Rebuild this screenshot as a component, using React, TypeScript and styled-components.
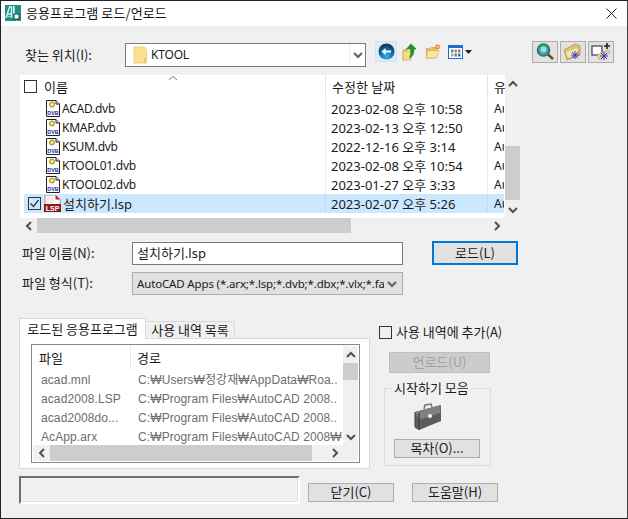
import React from "react";
import styled, { createGlobalStyle } from "styled-components";

const Global = createGlobalStyle`
  html, body { margin: 0; padding: 0; background: #f0f0f0; }
  * { box-sizing: border-box; }
  body { font-family: "Noto Sans", "Noto Sans CJK KR", sans-serif; font-size: 13px; color: #1a1a1a; }
`;

const Window = styled.div`
  width: 628px; height: 519px; display: flex; flex-direction: column; overflow: hidden;
  border: 1px solid #222; border-right-color: #444; background: #f0f0f0;
`;
const TitleBar = styled.div`
  height: 25px; flex: none; background: #fff; display: flex; align-items: center; padding: 0 10px 1px 4px; gap: 5px;
`;
const TitleText = styled.div`
  flex: 1; font-size: 13px; line-height: 16px; letter-spacing: 0.1px; color: #111;
  font-family: "Noto Sans CJK KR", sans-serif;
`;
const Body = styled.div`
  flex: 1; display: flex; flex-direction: column; padding-left: 18px; min-height: 0;
`;
const LocationRow = styled.div`
  height: 26px; margin-top: 15px; display: flex; align-items: flex-start; flex: none;
`;
const LocLabel = styled.div`
  width: 106px; padding: 6px 0 0 6px; line-height: 16px; font-family: "Noto Sans CJK KR", sans-serif; font-size: 13px;
`;
const Combo = styled.div`
  width: 241px; height: 24px; margin-top: 2px; background: #fff; border: 1px solid #7a7a7a; display: flex; align-items: center;
  padding-left: 7px; gap: 4px; font-size: 12px; line-height: 16px; letter-spacing: -0.2px;
`;
const ComboText = styled.span` flex: 1; `;
const ComboArrow = styled.span`
  width: 16px; height: 22px; border-left: 1px solid #e3eefa; display: flex; align-items: center; justify-content: center;
`;
const NavIcons = styled.div`
  display: flex; align-items: flex-start; margin-left: 9px; width: 157px;
`;
const NavBtn = styled.div<{ $w: number; $hover?: boolean }>`
  width: ${p => p.$w}px; height: 21px; display: flex; align-items: center; justify-content: center;
  background: ${p => (p.$hover ? "#dcebf5" : "transparent")};
  border: 1px solid ${p => (p.$hover ? "#d5e3ee" : "transparent")};
`;
const ToolBtns = styled.div` display: flex; gap: 2px; `;
const ToolBtn = styled.div`
  width: 26px; height: 22px; background: #e1e1e1; border: 1px solid #adadad; display: flex; align-items: center; justify-content: center;
`;

const FileGrid = styled.div`
  margin: 8px 0 0 1px; display: grid; grid-template-columns: 485px 15px; grid-template-rows: 143px 15px; width: 500px; flex: none;
`;
const ListView = styled.div`
  background: #fff; position: relative; overflow: hidden; display: flex; flex-direction: column;
`;
const HeadRow = styled.div`
  height: 24px; display: grid; grid-template-columns: 305px 162px 18px; flex: none;
`;
const HeadCell = styled.div<{ $sep?: boolean }>`
  display: flex; align-items: center; gap: 7px; padding-left: ${p => (p.$sep ? "6px" : "4px")}; overflow: hidden; white-space: nowrap;
  border-left: ${p => (p.$sep ? "1px solid #e5e5e5" : "0")}; line-height: 16px; padding-top: 1px; padding-bottom: 2px;
`;
const SortCaret = styled.svg` position: absolute; left: 148px; top: 0; `;
const FileRow = styled.div<{ $sel?: boolean }>`
  height: 19px; margin: 0 1px 0 4px; display: grid; grid-template-columns: 301px 162px 17px; flex: none;
  background: ${p => (p.$sel ? "#cce8ff" : "transparent")};
`;
const NameCell = styled.div<{ $sel?: boolean }>`
  display: flex; align-items: center; white-space: nowrap; line-height: 16px; gap: 2px;
  padding-left: ${p => (p.$sel ? "4px" : "22px")};
  font-size: ${p => (p.$sel ? "13px" : "12px")};
  letter-spacing: ${p => (p.$sel ? "0" : "-0.25px")};
`;
const DataCell = styled.div<{ $pad: number; $sel?: boolean; $small?: boolean }>`
  display: flex; align-items: center; white-space: nowrap; overflow: hidden; line-height: 16px; padding-left: ${p => p.$pad}px;
  font-size: ${p => (p.$small ? "12px" : "13px")};
  border-left: 1px solid ${p => (p.$sel ? "#bcdcf4" : "#e9eef5")};
`;
const CheckBox = styled.span<{ $ink: string }>`
  width: 13px; height: 13px; flex: none; border: 1px solid ${p => p.$ink}; background: transparent; display: inline-flex;
  align-items: center; justify-content: center;
`;
const SelCheckWrap = styled.span` margin-right: 1px; display: inline-flex; `;

const VScroll = styled.div`
  background: #f0f0f0; display: flex; flex-direction: column; align-items: stretch;
`;
const HScroll = styled.div<{ $span?: boolean }>`
  background: #f0f0f0; display: flex; align-items: stretch;
  ${p => (p.$span ? "grid-column: 1 / 3;" : "")}
`;
const Arrow = styled.div<{ $h?: boolean; $blank?: boolean }>`
  flex: none; display: flex; align-items: center; justify-content: center;
  ${p => (p.$h ? `width: ${p.$blank ? 15 : 17}px;` : "height: 17px;")}
`;
const VThumb = styled.div<{ $top: number; $len: number }>`
  flex: none; background: #cdcdcd; height: ${p => p.$len}px; margin-top: ${p => p.$top}px;
`;
const HThumb = styled.div<{ $left: number; $len: number }>`
  flex: none; background: #cdcdcd; width: ${p => p.$len}px; margin-left: ${p => p.$left}px;
`;
const Filler = styled.div` flex: 1; `;

const FormRow = styled.div<{ $top: number }>`
  display: flex; align-items: flex-start; margin-top: ${p => p.$top}px; flex: none;
`;
const FormLabel = styled.div`
  width: 113px; padding-left: 3px; line-height: 16px; padding-top: 3px; font-family: "Noto Sans CJK KR", sans-serif; font-size: 13px;
  white-space: nowrap;
`;
const TextField = styled.div`
  width: 271px; height: 23px; background: #fff; border: 1px solid #7a7a7a; padding-left: 4px; line-height: 20px; white-space: nowrap;
`;
const SelectBox = styled.div`
  width: 271px; height: 23px; background: #e1e1e1; border: 1px solid #adadad; padding: 0 3px 0 4px; display: flex; align-items: center;
`;
const SelectText = styled.span`
  width: 247px; overflow: hidden; white-space: nowrap; line-height: 18px; font-size: 11.5px; flex: none; letter-spacing: -0.15px;
`;
const SelectArrow = styled.span` flex: 1; display: flex; justify-content: center; `;
const Button = styled.div<{ $w: number; $h: number; $primary?: boolean; $disabled?: boolean }>`
  width: ${p => p.$w}px; height: ${p => p.$h}px; flex: none; display: flex; align-items: center; justify-content: center;
  line-height: 16px; font-size: 13px; white-space: nowrap; padding-bottom: 1px;
  font-family: "Noto Sans CJK KR", sans-serif;
  background: ${p => (p.$disabled ? "#cccccc" : "#e1e1e1")};
  color: ${p => (p.$disabled ? "#a0a0a0" : "#1a1a1a")};
  border: ${p => (p.$primary ? "2px solid #0078d7" : p.$disabled ? "1px solid #bfbfbf" : "1px solid #adadad")};
`;
const LoadSlot = styled.div` margin: -1px 0 0 29px; `;

const Lower = styled.div`
  margin-top: 23px; display: flex; align-items: flex-start; flex: none;
`;
const LeftCol = styled.div`
  width: 351px; flex: none;
`;
const TabStrip = styled.div`
  display: flex; align-items: flex-end; height: 21px; position: relative; z-index: 1;
`;
const Tab = styled.div<{ $active?: boolean; $w: number }>`
  width: ${p => p.$w}px; height: ${p => (p.$active ? 21 : 18)}px; display: flex; align-items: center; justify-content: center;
  background: ${p => (p.$active ? "#fff" : "#f0f0f0")};
  border: 1px solid #d9d9d9; border-bottom: ${p => (p.$active ? "0" : "1px solid #d9d9d9")};
  margin-left: ${p => (p.$active ? 0 : -1)}px; white-space: nowrap; line-height: 16px;
  font-family: "Noto Sans CJK KR", sans-serif; font-size: 13px;
`;
const TabPanel = styled.div`
  height: 131px; background: #fff; border: 1px solid #d9d9d9; margin-top: -1px; padding: 5px 0 0 11px;
`;
const AppList = styled.div`
  width: 329px; height: 119px; border: 1px solid #828790; display: grid; grid-template-columns: 310px 15px; grid-template-rows: 99px 16px;
  padding: 1px; background: #fff;
`;
const AppInner = styled.div` overflow: hidden; display: flex; flex-direction: column; `;
const AppHead = styled.div`
  height: 24px; display: grid; grid-template-columns: 97px 1fr; flex: none; line-height: 16px; font-family: "Noto Sans CJK KR", sans-serif; font-size: 13px;
`;
const AppHeadCell = styled.div<{ $sep?: boolean }>`
  display: flex; align-items: center; padding-left: 6px;
  border-left: ${p => (p.$sep ? "1px solid #e5e5e5" : "0")};
`;
const AppRow = styled.div`
  height: 19px; display: grid; grid-template-columns: 97px 1fr; flex: none; color: #6d6d6d; font-size: 12px; line-height: 16px;
  font-family: "Liberation Sans", "Noto Sans CJK KR", sans-serif; letter-spacing: 0.1px;
`;
const AppCell = styled.div<{ $pad: number }>`
  white-space: nowrap; overflow: hidden; padding-left: ${p => p.$pad}px; display: flex; align-items: center;
`;
const StatusRow = styled.div` margin-top: 7px; `;
const StatusBox = styled.div`
  width: 281px; height: 28px; background: #f0f0f0; border-style: solid; border-width: 2px; border-color: #6e6e6e #fff #fff #6e6e6e;
  box-shadow: inset -1px -1px 0 #e0e0e0;
`;

const RightCol = styled.div`
  flex: none; width: 140px; margin-left: 9px; padding-top: 7px;
`;
const AddRow = styled.div` display: flex; align-items: center; gap: 4px; line-height: 16px; height: 14px; font-family: "Noto Sans CJK KR", sans-serif; font-size: 13px; white-space: nowrap; `;
const UnloadWrap = styled.div` margin: 13px 0 0 10px; `;
const Group = styled.fieldset`
  margin: 8px 0 0 5px; padding: 0 0 0 9px; width: 107px; height: 85px; border: 1px solid #dcdcdc; display: flex; flex-direction: column; align-items: flex-start;
  min-width: 0;
`;
const Legend = styled.legend`
  margin-left: -2px; padding: 0 2px; line-height: 14px; font-family: "Noto Sans CJK KR", sans-serif; font-size: 13px;
`;
const CaseWrap = styled.div` height: 43px; display: flex; align-items: center; margin-top: 1px; padding-left: 20px; `;

const Actions = styled.div`
  display: flex; gap: 18px; margin: -21px 0 0 289px;
`;

const Chevron = ({ dir, c = "#505050" }: { dir: "up" | "down" | "left" | "right"; c?: string }) => {
  const pts = { up: "1,6 5,2 9,6", down: "1,2 5,6 9,2", left: "6,1 2,5 6,9", right: "2,1 6,5 2,9" }[dir];
  const w = dir === "up" || dir === "down" ? 10 : 8;
  const h = dir === "up" || dir === "down" ? 8 : 10;
  return (
    <svg width={w} height={h} viewBox={`0 0 ${w} ${h}`}>
      <polyline points={pts} fill="none" stroke={c} strokeWidth="2" />
    </svg>
  );
};

const AcadLogo = () => (
  <svg width="16" height="16" viewBox="0 0 16 16">
    <rect x="0" y="0" width="16" height="16" fill="#1f8f88" />
    <path d="M1 13 L4.5 2 H6.5 V13 M3 9 H6" stroke="#dff5f2" strokeWidth="1.4" fill="none" />
    <rect x="8" y="1" width="1.6" height="8" fill="#eafafa" />
    <rect x="9" y="9" width="5" height="5" fill="#fff" stroke="#0f4a48" />
    <path d="M11.5 15 V16 M8 11.5 H0" stroke="#8fd4cf" />
  </svg>
);
const Folder = () => (
  <svg width="14" height="18" viewBox="0 0 14 18">
    <path d="M1 1 H11 L13.5 3 V17 H1 Z" fill="#fbe28e" stroke="#ecd184" />
    <path d="M11 12 H13 V17 H11 Z" fill="#f3cb66" />
  </svg>
);
const DvbIcon = () => (
  <svg width="14" height="17" viewBox="0 0 14 17">
    <path d="M.5 .5 H10 L13.5 4 V16.5 H.5 Z" fill="#fff" stroke="#222" />
    <path d="M10 .5 V4 H13.5" fill="#ddd" stroke="#222" />
    <circle cx="6" cy="4.5" r="2.6" fill="#e6d22e" stroke="#7d7a20" strokeWidth=".7" />
    <circle cx="6" cy="4.5" r=".9" fill="#fff" />
    <text x="7" y="14.6" fontSize="5.4" fontWeight="700" textAnchor="middle" fill="#1b1f9e" fontFamily="Liberation Sans" letterSpacing="0">DVB</text>
  </svg>
);
const LspIcon = () => (
  <svg width="17" height="17" viewBox="0 0 17 17">
    <path d="M1 0 H11.5 L16 4.5 V10 H1 Z" fill="#fff" stroke="#c0504d" strokeWidth=".7" />
    <path d="M11.5 0 V4.5 H16 Z" fill="#b22222" />
    <path d="M2 1 H10 V8 H2 Z" fill="#fbeaea" />
    <rect x="0" y="9" width="17" height="8" fill="#8b1a1a" />
    <text x="8.5" y="15.6" fontSize="7" fontWeight="700" textAnchor="middle" fill="#fff" fontFamily="Liberation Sans">LSP</text>
  </svg>
);
const BackIcon = () => (
  <svg width="17" height="17" viewBox="0 0 17 17">
    <defs>
      <radialGradient id="bk" cx="50%" cy="80%" r="70%">
        <stop offset="0" stopColor="#38b4ea" />
        <stop offset=".6" stopColor="#0f6aa8" />
        <stop offset="1" stopColor="#0b3b66" />
      </radialGradient>
    </defs>
    <circle cx="8.5" cy="8.5" r="8" fill="url(#bk)" />
    <path d="M3.5 8.5 L7.5 5 V7.4 H13 V9.6 H7.5 V12 Z" fill="#fff" />
  </svg>
);
const UpIcon = () => (
  <svg width="15" height="18" viewBox="0 0 15 18">
    <path d="M1 7 L5 6 V14 L1 17.5 Z" fill="#e8c25e" stroke="#c9a546" strokeWidth=".6" />
    <path d="M1 17 V8 H9 V17 Z" fill="#f6dc84" stroke="#c9a546" strokeWidth=".7" />
    <path d="M9 .8 L14 6 H12 C12 10 11.5 13 7.5 15 C9 12 9 9 8.5 6 H4.5 Z" fill="#1f9a2a" stroke="#0f6a18" strokeWidth=".5" />
  </svg>
);
const NewFolderIcon = () => (
  <svg width="16" height="15" viewBox="0 0 16 15">
    <path d="M1 4.5 H5 L6 3.5 H11 V14 H2 Z" fill="#e8c25e" stroke="#c2a044" strokeWidth=".6" />
    <path d="M1 14 L3 6.5 H14 L11.5 14 Z" fill="#f9e59c" stroke="#c9a546" strokeWidth=".6" />
    <circle cx="12.5" cy="3" r="2.4" fill="#ff7d2a" />
    <circle cx="12.5" cy="3" r="1" fill="#ffe27a" />
  </svg>
);
const ViewsIcon = () => (
  <svg width="24" height="14" viewBox="0 0 24 14">
    <rect x=".5" y=".5" width="14" height="13" fill="#fff" stroke="#1a6fd0" />
    <rect x="0" y="0" width="15" height="3" fill="#1a6fd0" />
    <rect x="3" y="4.5" width="2.4" height="3" fill="#4a7fd0" /><rect x="6.5" y="4.5" width="2.4" height="3" fill="#57a860" /><rect x="10" y="4.5" width="2.4" height="3" fill="#d05a5a" />
    <rect x="3" y="8.5" width="2.4" height="3" fill="#d8a83a" /><rect x="6.5" y="8.5" width="2.4" height="3" fill="#4a7fd0" /><rect x="10" y="8.5" width="2.4" height="3" fill="#2a70b8" />
    <path d="M17 5 H24 L20.5 9 Z" fill="#222" />
  </svg>
);
const FindIcon = () => (
  <svg width="19" height="18" viewBox="0 0 19 18">
    <circle cx="7.5" cy="7" r="6" fill="#3fa0b0" stroke="#1d7d55" strokeWidth="1.6" />
    <circle cx="7.5" cy="6.5" r="3" fill="#bfe6f2" opacity=".8" />
    <path d="M12 11.5 L17 16" stroke="#6b4a22" strokeWidth="2.6" />
  </svg>
);
const Spark = ({ x, y }: { x: number; y: number }) => (
  <g stroke="#3a35c8" strokeWidth="1">
    <path d={`M${x - 4} ${y} H${x + 4} M${x} ${y - 4} V${y + 4} M${x - 3} ${y - 3} L${x + 3} ${y + 3} M${x - 3} ${y + 3} L${x + 3} ${y - 3}`} />
  </g>
);
const StarFolderIcon = () => (
  <svg width="20" height="18" viewBox="0 0 20 18">
    <path d="M1 7 L12 1 L17 3 V12 L4 17 Z" fill="#dcc07a" stroke="#a98f4e" strokeWidth=".8" />
    <path d="M3 9 L14 5 L15 10 L5 15 Z" fill="#f4e4ae" />
    <Spark x={12} y={12} />
  </svg>
);
const AddFolderIcon = () => (
  <svg width="21" height="18" viewBox="0 0 21 18">
    <rect x="1" y="3" width="10" height="9" fill="#fff" stroke="#30405c" strokeWidth="1.2" />
    <path d="M16 0 V6 M13 3 H19" stroke="#222" strokeWidth="1.6" />
    <path d="M6 12 L17 7 L19 9 L9 17 Z" fill="#f0d68a" stroke="#a98f4e" strokeWidth=".6" />
    <Spark x={13} y={13} />
  </svg>
);
const Briefcase = () => (
  <svg width="28" height="30" viewBox="0 0 28 30">
    <path d="M10 6 L11 2 L17 1 L18 4" fill="none" stroke="#777" strokeWidth="1.5" />
    <path d="M1 9 L27 2 V18 L5 27 L1 25 Z" fill="#5c5c5c" />
    <path d="M1 9 L27 2 L26 10 L5 17 Z" fill="#7f7f7f" />
    <path d="M5 10 V27" stroke="#454545" strokeWidth="1.5" />
    <path d="M1 9 L1 24" stroke="#3e3e3e" strokeWidth="1" />
    <circle cx="16" cy="13" r="2" fill="#f4f4f4" />
  </svg>
);
const CheckMark = () => (
  <svg width="11" height="11" viewBox="0 0 11 11">
    <polyline points="1.5,5.5 4.5,8.5 9.5,2" fill="none" stroke="#333" strokeWidth="1.3" />
  </svg>
);

const files = [
  { name: "ACAD.dvb", date: "2023-02-08 오후 10:58" },
  { name: "KMAP.dvb", date: "2023-02-13 오후 12:50" },
  { name: "KSUM.dvb", date: "2022-12-16 오후 3:14" },
  { name: "KTOOL01.dvb", date: "2023-02-08 오후 10:54" },
  { name: "KTOOL02.dvb", date: "2023-01-27 오후 3:33" },
];
const apps = [
  { f: "acad.mnl", p: "C:₩Users₩정강재₩AppData₩Roa.." },
  { f: "acad2008.LSP", p: "C:₩Program Files₩AutoCAD 2008.." },
  { f: "acad2008do...", p: "C:₩Program Files₩AutoCAD 2008.." },
  { f: "AcApp.arx", p: "C:₩Program Files₩AutoCAD 2008₩" },
];

export default function App() {
  return (
    <>
      <Global />
      <Window>
        <TitleBar>
          <AcadLogo />
          <TitleText>응용프로그램 로드/언로드</TitleText>
          <svg width="11" height="11" viewBox="0 0 11 11">
            <path d="M.5 .5 L10.5 10.5 M10.5 .5 L.5 10.5" stroke="#222" strokeWidth="1" />
          </svg>
        </TitleBar>
        <Body>
          <LocationRow>
            <LocLabel>찾는 위치(I):</LocLabel>
            <Combo>
              <Folder />
              <ComboText>KTOOL</ComboText>
              <ComboArrow><Chevron dir="down" c="#606060" /></ComboArrow>
            </Combo>
            <NavIcons>
              <NavBtn $w={22} $hover><BackIcon /></NavBtn>
              <NavBtn $w={24}><UpIcon /></NavBtn>
              <NavBtn $w={23}><NewFolderIcon /></NavBtn>
              <NavBtn $w={32}><ViewsIcon /></NavBtn>
            </NavIcons>
            <ToolBtns>
              <ToolBtn><FindIcon /></ToolBtn>
              <ToolBtn><StarFolderIcon /></ToolBtn>
              <ToolBtn><AddFolderIcon /></ToolBtn>
            </ToolBtns>
          </LocationRow>

          <FileGrid>
            <ListView>
              <SortCaret width="10" height="6" viewBox="0 0 10 6">
                <polyline points="1,5 5,1.5 9,5" fill="none" stroke="#777" strokeWidth="1" />
              </SortCaret>
              <HeadRow>
                <HeadCell><CheckBox $ink="#333" />이름</HeadCell>
                <HeadCell $sep>수정한 날짜</HeadCell>
                <HeadCell $sep>유형</HeadCell>
              </HeadRow>
              {files.map(f => (
                <FileRow key={f.name}>
                  <NameCell><DvbIcon />{f.name}</NameCell>
                  <DataCell $pad={5}>{f.date}</DataCell>
                  <DataCell $pad={6} $small>AutoCAD</DataCell>
                </FileRow>
              ))}
              <FileRow $sel>
                <NameCell $sel>
                  <SelCheckWrap><CheckBox $ink="#333"><CheckMark /></CheckBox></SelCheckWrap>
                  <LspIcon />설치하기.lsp
                </NameCell>
                <DataCell $pad={5} $sel>2023-02-07 오후 5:26</DataCell>
                <DataCell $pad={6} $sel $small>AutoCAD</DataCell>
              </FileRow>
            </ListView>
            <VScroll>
              <Arrow><Chevron dir="up" /></Arrow>
              <VThumb $top={54} $len={54} />
              <Filler />
              <Arrow><Chevron dir="down" /></Arrow>
            </VScroll>
            <HScroll>
              <Arrow $h><Chevron dir="left" /></Arrow>
              <HThumb $left={0} $len={314} />
              <Filler />
              <Arrow $h><Chevron dir="right" /></Arrow>
            </HScroll>
          </FileGrid>

          <FormRow $top={9}>
            <FormLabel>파일 이름(N):</FormLabel>
            <TextField>설치하기.lsp</TextField>
            <LoadSlot><Button $w={86} $h={24} $primary>로드(L)</Button></LoadSlot>
          </FormRow>
          <FormRow $top={7}>
            <FormLabel>파일 형식(T):</FormLabel>
            <SelectBox>
              <SelectText>AutoCAD Apps (*.arx;*.lsp;*.dvb;*.dbx;*.vlx;*.fas)</SelectText>
              <SelectArrow><Chevron dir="down" c="#606060" /></SelectArrow>
            </SelectBox>
          </FormRow>

          <Lower>
            <LeftCol>
              <TabStrip>
                <Tab $active $w={127}>로드된 응용프로그램</Tab>
                <Tab $w={90}>사용 내역 목록</Tab>
              </TabStrip>
              <TabPanel>
                <AppList>
                  <AppInner>
                    <AppHead>
                      <AppHeadCell>파일</AppHeadCell>
                      <AppHeadCell $sep>경로</AppHeadCell>
                    </AppHead>
                    {apps.map(a => (
                      <AppRow key={a.f}>
                        <AppCell $pad={8}>{a.f}</AppCell>
                        <AppCell $pad={8}>{a.p}</AppCell>
                      </AppRow>
                    ))}
                  </AppInner>
                  <VScroll>
                    <Arrow><Chevron dir="up" /></Arrow>
                    <VThumb $top={0} $len={17} />
                    <Filler />
                    <Arrow><Chevron dir="down" /></Arrow>
                  </VScroll>
                  <HScroll $span>
                    <Arrow $h><Chevron dir="left" /></Arrow>
                    <HThumb $left={0} $len={262} />
                    <Filler />
                    <Arrow $h><Chevron dir="right" /></Arrow>
                    <Arrow $h $blank />
                  </HScroll>
                </AppList>
              </TabPanel>
              <StatusRow><StatusBox /></StatusRow>
            </LeftCol>
            <RightCol>
              <AddRow><CheckBox $ink="#333" />사용 내역에 추가(A)</AddRow>
              <UnloadWrap><Button $w={101} $h={21} $disabled>언로드(U)</Button></UnloadWrap>
              <Group>
                <Legend>시작하기 모음</Legend>
                <CaseWrap><Briefcase /></CaseWrap>
                <Button $w={86} $h={19}>목차(O)...</Button>
              </Group>
            </RightCol>
          </Lower>
          <Actions>
            <Button $w={86} $h={19}>닫기(C)</Button>
            <Button $w={86} $h={19}>도움말(H)</Button>
          </Actions>
        </Body>
      </Window>
    </>
  );
}
